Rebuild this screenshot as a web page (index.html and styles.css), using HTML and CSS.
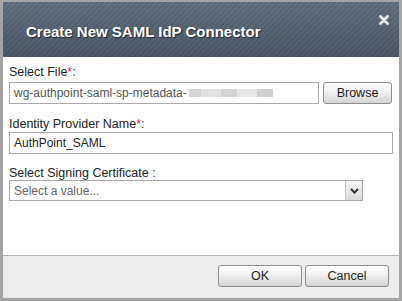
FILE: index.html
```html
<!DOCTYPE html>
<html>
<head>
<meta charset="utf-8">
<link rel="stylesheet" href="styles.css">
</head>
<body>
<div class="dialog">
  <div class="header">
    <h1 class="title">Create New SAML IdP Connector</h1>
    <span class="close"><svg width="10" height="10" viewBox="0 0 10 10"><path d="M1.5 1.5 L8.5 8.5 M8.5 1.5 L1.5 8.5" stroke="#fff" stroke-width="2.6" stroke-linecap="round"/></svg></span>
  </div>
  <div class="body">
    <div class="label">Select File<span class="req">*</span>:</div>
    <div class="row">
      <div class="input file">wg-authpoint-saml-sp-metadata-<span class="blur b1"></span><span class="blur b2"></span><span class="blur b3"></span><span class="blur b4"></span><span class="blur b5"></span></div>
      <button class="btn browse">Browse</button>
    </div>
    <div class="label second">Identity Provider Name<span class="req">*</span>:</div>
    <div class="input full">AuthPoint_SAML</div>
    <div class="label third">Select Signing Certificate :</div>
    <div class="select">
      <span class="placeholder">Select a value...</span>
      <span class="arrow"><svg width="9" height="6" viewBox="0 0 9 6"><path d="M1 1 L4.5 4.5 L8 1" stroke="#333" stroke-width="2" fill="none"/></svg></span>
    </div>
  </div>
  <div class="footer">
    <button class="btn foot">OK</button>
    <button class="btn foot">Cancel</button>
  </div>
</div>
</body>
</html>
```
FILE: styles.css
```css
html, body {
  margin: 0;
  padding: 0;
  background: #fff;
}
.dialog {
  width: 402px;
  height: 301px;
  box-sizing: border-box;
  border: 3px solid #a4a4a4;
  border-top-width: 2px;
  display: flex;
  flex-direction: column;
  font-family: "Liberation Sans", Arial, sans-serif;
  background: #fff;
}
.header {
  height: 55px;
  flex: none;
  display: flex;
  align-items: center;
  justify-content: space-between;
  padding: 0 10px 0 23px;
  background:
    repeating-linear-gradient(135deg, rgba(255,255,255,0.03) 0 2px, rgba(0,0,0,0.03) 2px 4px),
    linear-gradient(#5f6c7b, #4a5563);
}
.title {
  margin: 4px 0 0 0;
  font-size: 15px;
  font-weight: bold;
  color: #fff;
  text-shadow: 1px 1px 1px #1e2630;
}
.close {
  align-self: flex-start;
  margin-top: 13px;
  display: flex;
}
.body {
  flex: 1;
  padding: 8px 6px 0 6px;
  display: flex;
  flex-direction: column;
  color: #222;
  font-size: 12px;
}
.label {
  font-size: 12.5px;
  line-height: 15px;
  margin-bottom: 2px;
  color: #222;
}
.label.second { margin-top: 13px; margin-bottom: 0; }
.label.third { margin-top: 12px; margin-bottom: 0; line-height: 14px; }
.req { color: #b03030; }
.row {
  display: flex;
  gap: 4px;
}
.input {
  height: 22px;
  box-sizing: border-box;
  border: 1px solid #a9a9a9;
  padding: 0 4px;
  display: flex;
  align-items: center;
  font-size: 12px;
  color: #555;
}
.input.file { width: 310px; }
.input.full { color: #222; width: 100%; }
.blur {
  display: inline-block;
  height: 8px;
}
.b1 { width: 12px; background: #d6d6d6; margin-left: 2px; }
.b2 { width: 20px; background: #e2e2e2; }
.b3 { width: 16px; background: #d3d3d3; }
.b4 { width: 20px; background: #e6e6e6; }
.b5 { width: 16px; background: #d0d0d0; }
.btn {
  font-family: "Liberation Sans", Arial, sans-serif;
  font-size: 12.5px;
  color: #222;
  border: 1px solid #8e8e8e;
  border-radius: 3px;
  background: linear-gradient(#ffffff, #f1f1f1 45%, #d4d4d4);
  padding: 0;
  height: 22px;
}
.browse { width: 69px; }
.select {
  margin-top: 0;
  width: 354px;
  height: 21px;
  box-sizing: border-box;
  border: 1px solid #a9a9a9;
  display: flex;
  align-items: center;
  justify-content: space-between;
}
.placeholder {
  padding-left: 4px;
  font-size: 12px;
  color: #666;
}
.arrow {
  width: 16px;
  height: 19px;
  border-left: 1px solid #c8c8c8;
  background: linear-gradient(#f4f4f4, #d8d8d8);
  display: flex;
  align-items: center;
  justify-content: center;
}
.footer {
  height: 43px;
  flex: none;
  box-sizing: border-box;
  border-top: 1px solid #b4b4b4;
  background: #ececec;
  display: flex;
  justify-content: flex-end;
  align-items: flex-start;
  padding: 9px 10px 0 0;
  gap: 3px;
}
.foot { width: 84px; }
```
